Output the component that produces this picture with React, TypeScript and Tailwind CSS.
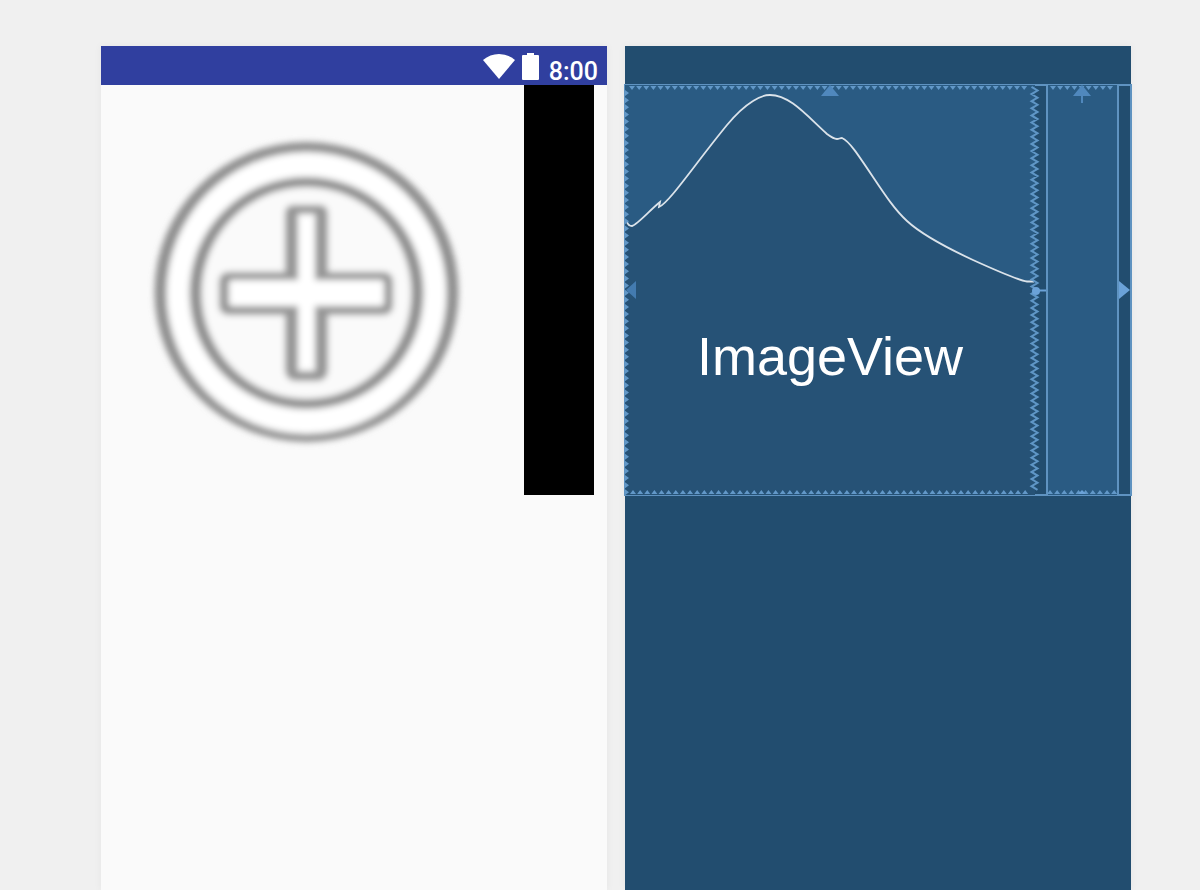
const PERIOD = 7.13;

// row of small triangles hanging from a horizontal edge
const teethX = (from: number, count: number, y: number, dir: number) =>
  Array.from({ length: count }, (_, i) => {
    const x = from + i * PERIOD;
    return `M${x - 3} ${y}L${x} ${y + 4 * dir}L${x + 3} ${y}Z`;
  }).join("");

const teethY = (from: number, count: number, x: number) =>
  Array.from({ length: count }, (_, i) => {
    const y = from + i * PERIOD;
    return `M${x} ${y - 3}L${x + 4} ${y}L${x} ${y + 3}Z`;
  }).join("");

const spring = (x: number, top: number, count: number) =>
  `M${x - 3} ${top - PERIOD / 2}L${x + 3} ${top}` +
  Array.from({ length: count }, (_, i) => {
    const y = top + i * PERIOD;
    return `L${x - 3} ${y + PERIOD / 2}L${x + 3} ${y + PERIOD}`;
  }).join("");

const CURVE =
  "M2 137C3 140 4 141 7 141C12 140 26 124 35 117L34 122C44 118 70 79 102 40C112 28 120 21 128 16C134 12 139 10 145 10C165 10 182 31 202 49C206 52 209 54 212 54C214 54 215 53 217 53C224 56 232 68 248 92C260 110 270 125 282 136C294 147 320 162 348 175C370 185 392 195 402 196.500H409";

const WifiIcon = () => (
  <svg className="h-[26px] w-8" viewBox="0 0 32 26" fill="#fff" aria-hidden="true">
    <path d="M0 6Q7 0 16 0T32 6L16 25Z" />
  </svg>
);

const BatteryIcon = () => (
  <svg className="h-[27px] w-[17px]" viewBox="0 0 17 27" fill="#fff" aria-hidden="true">
    <path d="M5 0H12V2H16Q17 2 17 3V26Q17 27 16 27H1Q0 27 0 26V3Q0 2 1 2H5Z" />
  </svg>
);

const StatusBar = () => (
  <div className="flex h-[39px] items-end justify-end bg-[#303f9f] pr-[9px]">
    <div className="flex items-end gap-[7px] pb-[5px]">
      <WifiIcon />
      <BatteryIcon />
    </div>
    <span className="pl-[10px] font-[Roboto,sans-serif] text-[25px] leading-[26px] font-medium text-white">
      8:00
    </span>
  </div>
);

const AddImage = () => (
  <svg
    className="block h-[410px] w-full"
    viewBox="0 0 410 410"
    role="img"
    aria-label="Add"
  >
    <defs>
      <filter id="soft" x="-10%" y="-10%" width="120%" height="120%">
        <feGaussianBlur stdDeviation="3" />
      </filter>
    </defs>
    {/* each ring is a grey ellipse under a lighter one, so its sides are wider */}
    <g filter="url(#soft)">
      <ellipse cx="205.5" cy="207" rx="152" ry="150" fill="#8f8f8f" />
      <ellipse cx="205.5" cy="208" rx="140" ry="141" fill="#fff" />
      <ellipse cx="205.5" cy="208" rx="117" ry="116" fill="#8f8f8f" />
      <ellipse cx="205.5" cy="208" rx="105" ry="106" fill="#fafafa" />
      <path
        d="M192 120H219Q227 120 227 130V187H281Q292 187 292 198V219Q292 230 281 230H227V283Q227 296 215 296H196Q184 296 184 283V230H129Q118 230 118 219V198Q118 187 129 187H184V130Q184 120 192 120Z"
        fill="#969696"
      />
      <path
        d="M197 129H214V195H280Q283 195 283 198V218Q283 221 280 221H214V286H197V221H131Q128 221 128 218V198Q128 195 131 195H197Z"
        fill="#fff"
      />
    </g>
  </svg>
);

const DesignPreview = () => (
  <section className="flex flex-1 flex-col bg-[#fafafa] shadow-[0_0_8px_rgba(0,0,0,0.05)]">
    <StatusBar />
    <div className="flex gap-[13px] pr-[13px]">
      <div className="flex-1">
        <AddImage />
      </div>
      <div className="w-[70px] bg-black"></div>
    </div>
  </section>
);

const ImageViewBox = () => (
  <div className="relative flex-1 bg-[#265276]">
    <svg
      className="absolute inset-0 h-full w-full overflow-visible"
      viewBox="0 0 410 410"
      preserveAspectRatio="none"
      aria-hidden="true"
    >
      <path d={`${CURVE}L410 0L0 0L0 137Z`} fill="#2a5b83" />
      <path d={CURVE} fill="none" stroke="#dbe3ea" strokeWidth="1.8" />
      <g fill="#6298c8">
        <path d={teethX(7, 56, 1, 1)} />
        <path d={teethX(8, 56, 409, -1)} />
        <path d={teethY(8, 57, 0)} />
      </g>
      <path d={spring(409.5, 5.5, 56)} fill="none" stroke="#5f96c6" strokeWidth="2" />
      {/* anchors */}
      <path d="M205 0L214 11H196Z" fill="#5088bd" />
      <path d="M1 205L11 196V214Z" fill="#437bb0" />
      <circle cx="411" cy="206" r="4" fill="#6ba2d8" />
      <path d="M411 205.500H422" stroke="#6ba2d8" strokeWidth="2" />
    </svg>
    <p className="relative pt-[241px] text-center text-[54px] leading-[60px] text-white">
      ImageView
    </p>
  </div>
);

const SideViewBox = () => (
  <div className="relative w-[73px] border-x-2 border-[#5f93c1] bg-[#2a5b83]">
    <svg
      className="absolute inset-0 h-full w-full overflow-visible"
      viewBox="0 0 69 410"
      aria-hidden="true"
    >
      <g fill="#6298c8">
        <path d={teethX(5, 9, 1, 1)} />
        <path d={teethX(2, 10, 409, -1)} />
      </g>
      <path d="M34 0L43 11H35V18H33V11H25Z" fill="#5088bd" />
      <path d="M30 409L34 405L38 409Z" fill="#6ba2d8" />
      <path d="M71 196L82 205L71 214Z" fill="#6ba2d8" />
    </svg>
  </div>
);

const Blueprint = () => (
  <section className="flex flex-1 flex-col bg-[#224d6f] pt-[39px] shadow-[0_0_8px_rgba(0,0,0,0.05)]">
    <div className="isolate flex h-[410px] gap-[11px] pr-3 outline-2 -outline-offset-1 outline-[#5f93c1]">
      <ImageViewBox />
      <SideViewBox />
    </div>
  </section>
);

export default function App() {
  return (
    <main className="flex min-h-screen gap-[18px] bg-[#f0f0f0] pt-[46px] pr-[69px] pl-[101px] font-['Liberation_Sans',Arial,sans-serif]">
      <DesignPreview />
      <Blueprint />
    </main>
  );
}
